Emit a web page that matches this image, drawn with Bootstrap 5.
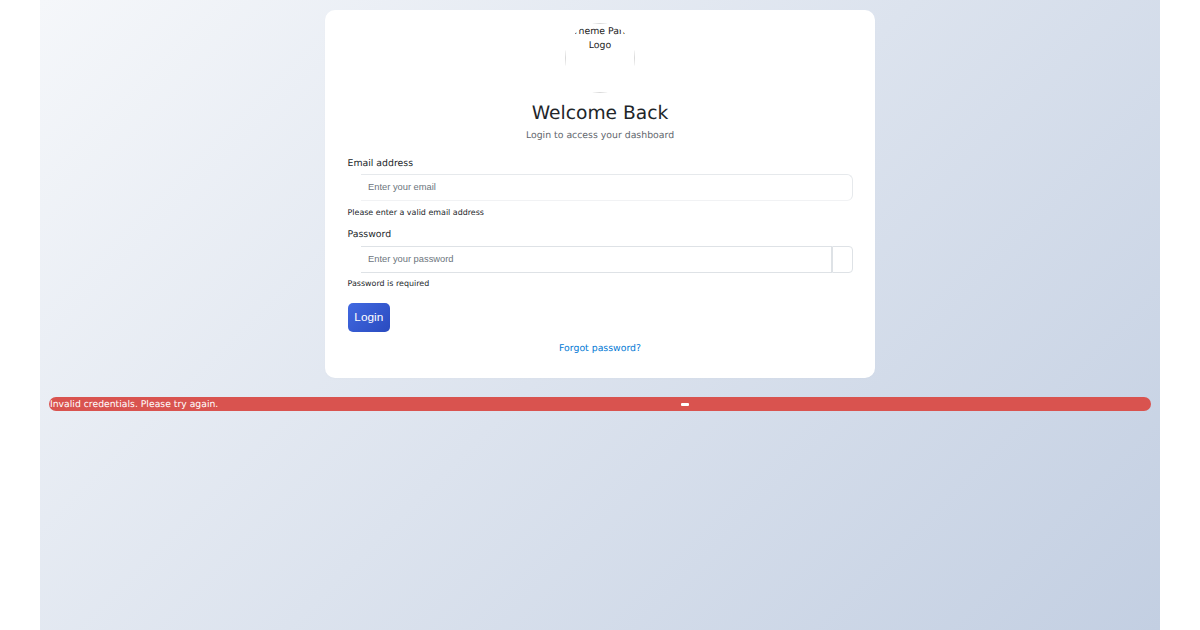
<!DOCTYPE html>
<html lang="en">
<head>
    <meta charset="UTF-8">
    <meta name="viewport" content="width=device-width, initial-scale=1.0">
    <title>Login</title>
    <link rel="stylesheet" href="https://cdn.jsdelivr.net/npm/bootstrap@5.3.0/dist/css/bootstrap.min.css">
    <style>
        body {
            background: #fff;
            font-family: "DejaVu Sans", sans-serif;
            text-rendering: geometricPrecision;
        }
        .login-page {   /*gradient column*/
            width: 1120px;
            height: 630px;
            padding: 10px 9px 0;
            background: linear-gradient(135deg, #f5f7fa 0%, #c3cfe2 100%);
        }
        .login-box {
            width: 550px;
            height: 368px;
            margin: 0 auto;
            padding: 13px 22.5px 0;
            background: #fff;
            border-radius: 10px;
            box-shadow: 0 1px 3px rgba(0, 0, 0, .015);
        }
        .logo-round {
            width: 70px;
            height: 70px;
            margin: 0 auto 9px;
            border-radius: 50%;
            overflow: hidden;
            color: #222;
            font-size: 9.33px;
            line-height: 14px;
            text-align: center;
        }
        .logo-frame {
            height: 70px;
            padding: 1px 0 0;
            border: 1px solid #d9d9d9;
        }
        .logo-line { display: block; white-space: nowrap; }
        .logo-line-top { padding-left: 1px; }
        .welcome-title {
            font-size: 18.67px;
            line-height: 23px;
            font-weight: 400;
            color: #212529;
            margin: 0 0 5px;
        }
        .welcome-sub {
            font-size: 9.33px;
            line-height: 12px;
            color: #5f666d;
            margin: 0 0 16px;
        }
        .field-label {
            font-size: 9.33px;
            line-height: 12px;
            color: #212529;
            margin: 0 0 4px;
            display: block;
        }
        .pw-label { margin-bottom: 5px; }
        .field-row { height: 27px; }
        .icon-gap { width: 13px; flex: none; }
        .field-input {
            flex: 1 1 auto;
            min-width: 0;
            padding: 1px 7.5px 0;
            font-family: "Liberation Sans", sans-serif;
            font-size: 9.33px;
            color: #212529;
            border: 1px solid #dee2e6;
            border-left: 0;
            outline: 0;
        }
        .field-input::placeholder { color: #6c757d; opacity: 1; }
        .mail-input {
            border-top-right-radius: 6px;
            border-bottom-right-radius: 6px;
            border-color: #e6e9ec #e6e9ec #f1f2f4;
        }
        .eye-btn {
            width: 20.5px;
            flex: none;
            padding: 0;
            background: #fff;
            border: 1px solid #dee2e6;
            border-top-right-radius: 4px;
            border-bottom-right-radius: 4px;
        }
        .field-error {
            font-size: 7.95px;
            line-height: 10px;
            color: #212529;
            margin: 6px 0 0;
        }
        .mail-error { margin: 7px 0 1px; }
        .field-block { margin-bottom: 11px; }
        .login-btn {
            display: block;
            width: 42.6px;
            height: 29px;
            padding: 0;
            margin-top: 14px;
            font-family: "Liberation Sans", sans-serif;
            font-size: 11.8px;
            color: #fff;
            border: 0;
            border-radius: 5px;
            background: linear-gradient(135deg, #4169e1, #2a4bbf);
        }
        .forgot-wrap { margin-top: 7px; line-height: 14px; }
        .forgot-link {
            font-size: 9.33px;
            line-height: 12px;
            color: #0078d4;
            text-decoration: none;
        }
        .error-bar {
            display: grid;
            grid-template-columns: 632px 8px 1fr;
            align-items: center;
            height: 14px;
            margin-top: 19px;
            padding: 0;
            background: #d9534f;
            border-radius: 7px;
            color: #fff;
            font-size: 9.28px;
        }
        .error-bar span { margin-top: 1px; padding-left: 1px; white-space: nowrap; }
        .bar-close {
            width: 8px;
            height: 3px;
            padding: 0;
            background: #fff;
            border: 0;
            border-radius: 1px;
        }
    </style>
</head>
<body>
    <div class="login-page mx-auto">
        <div class="login-box">
            <div class="logo-round">
                <div class="logo-frame">
                    <span class="logo-line logo-line-top">Theme Park</span>
                    <span class="logo-line">Logo</span>
                </div>
            </div>
            <h1 class="welcome-title text-center">Welcome Back</h1>
            <p class="welcome-sub text-center">Login to access your dashboard</p>

            <form>
                <div class="field-block">
                    <label class="field-label" for="email">Email address</label>
                    <div class="field-row d-flex">
                        <span class="icon-gap"></span>
                        <input type="email" id="email" class="field-input mail-input" placeholder="Enter your email">
                    </div>
                    <p class="field-error mail-error">Please enter a valid email address</p>
                </div>
                <div class="field-block">
                    <label class="field-label pw-label" for="password">Password</label>
                    <div class="field-row d-flex">
                        <span class="icon-gap"></span>
                        <input type="password" id="password" class="field-input" placeholder="Enter your password">
                        <button type="button" class="eye-btn" aria-label="Show password"></button>
                    </div>
                    <p class="field-error">Password is required</p>
                </div>
                <button type="button" class="login-btn">Login</button>
                <div class="forgot-wrap text-center">
                    <a href="#" class="forgot-link">Forgot password?</a>
                </div>
            </form>
        </div>

        <div class="error-bar" role="alert">
            <span>Invalid credentials. Please try again.</span>
            <button type="button" class="bar-close" aria-label="Close"></button>
        </div>
    </div>
</body>
</html>
